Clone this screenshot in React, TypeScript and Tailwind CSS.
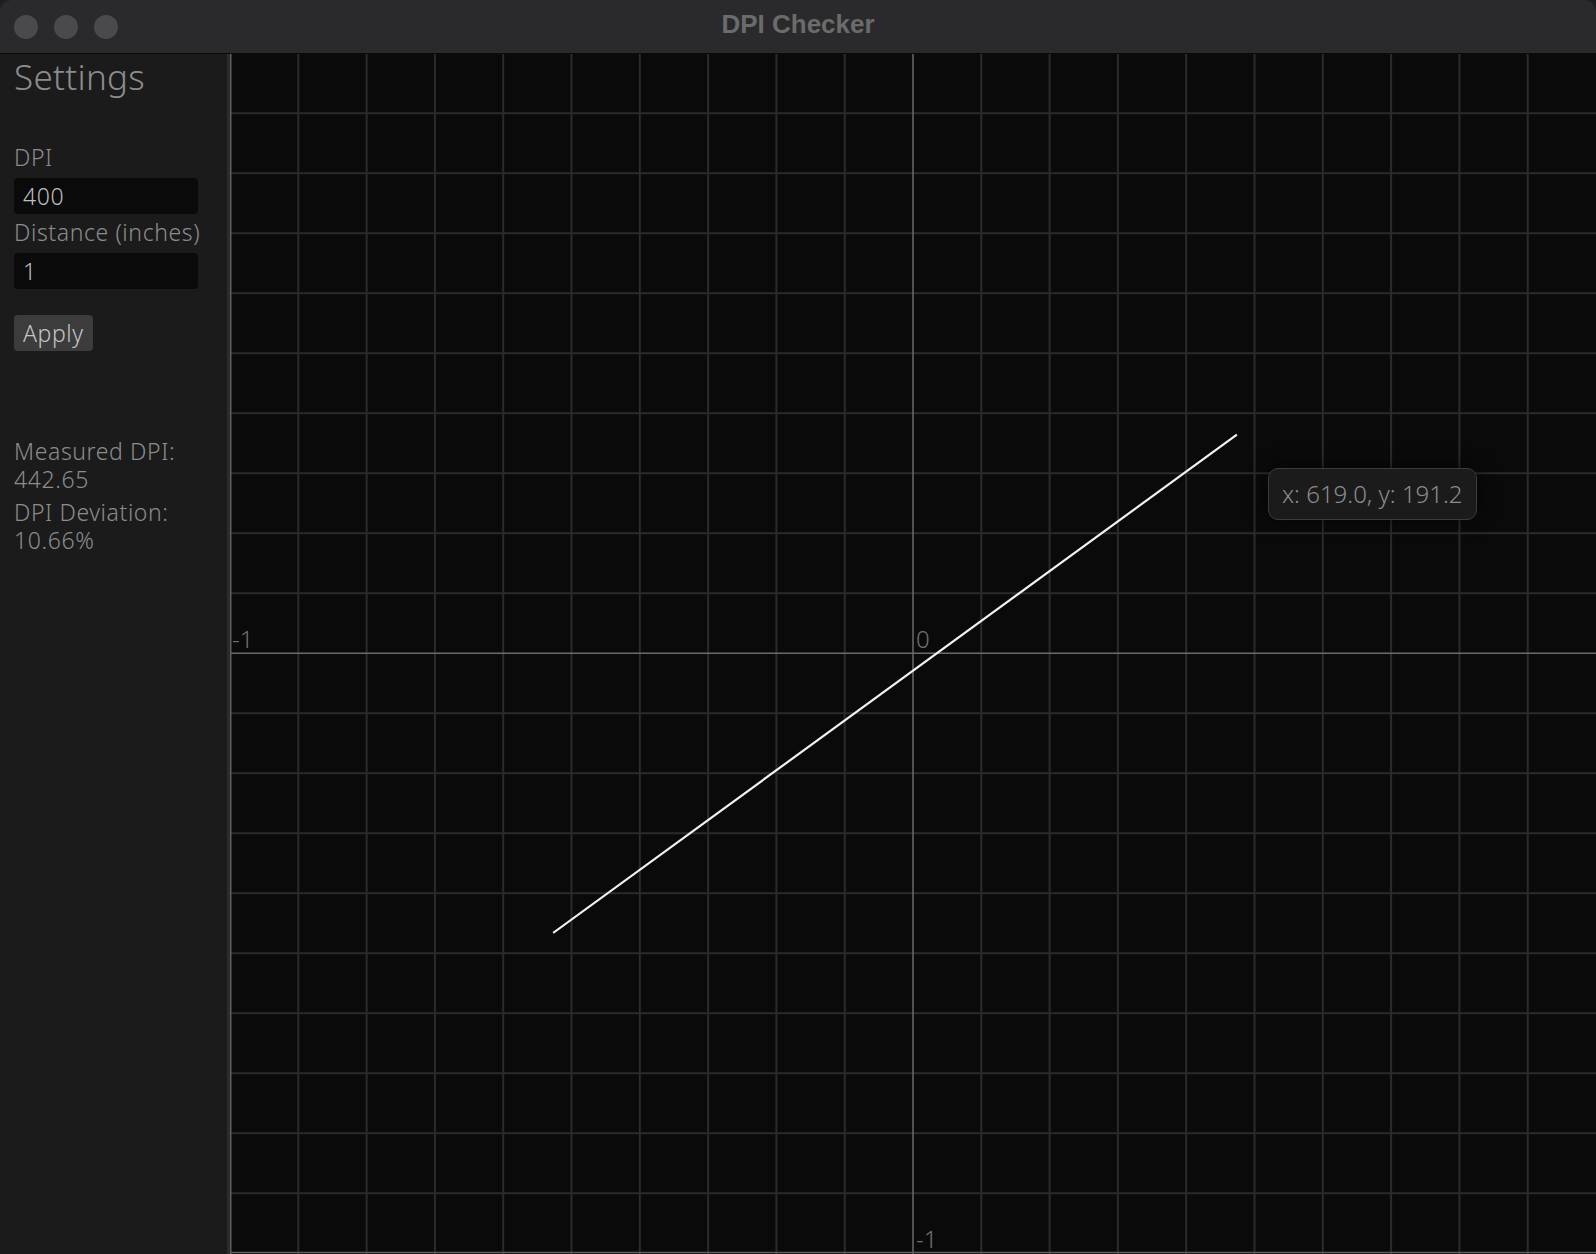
import React from 'react'

const PLOT_W = 1366
const PLOT_H = 1200
const CELL_X = PLOT_W / 20
const CELL_Y = 60

const GRID_COLOR = '#2b2b2b'
const AXIS_COLOR = '#6a6a6a'

function TrafficLights() {
  return (
    <div className="flex items-center gap-[16px] pl-[14px]">
      <span className="w-[24px] h-[24px] rounded-full bg-[#4a4a4c]" />
      <span className="w-[24px] h-[24px] rounded-full bg-[#4a4a4c]" />
      <span className="w-[24px] h-[24px] rounded-full bg-[#4a4a4c]" />
    </div>
  )
}

function Field({ label, value }: { label: string; value: string }) {
  return (
    <>
      <div className="text-[23px] leading-[28px] text-[#8c8c8c]">{label}</div>
      <div className="mt-[7px] h-[36px] w-[184px] rounded-[4px] bg-[#0a0a0a] pl-[9px] flex items-center text-[23px] text-[#bdbdbd]">
        {value}
      </div>
    </>
  )
}

function Sidebar() {
  return (
    <div className="w-[227px] flex-shrink-0 bg-[#1b1b1b] px-[14px] font-['Noto_Sans',sans-serif] font-light tracking-[0.6px]">
      <div className="mt-[3px] text-[35px] leading-[40px] tracking-[0.3px] text-[#8c8c8c]">Settings</div>
      <div className="mt-[46px] flex flex-col">
        <Field label="DPI" value="400" />
      </div>
      <div className="mt-[4px] flex flex-col">
        <Field label="Distance (inches)" value="1" />
      </div>
      <button className="mt-[26px] h-[36px] px-[9px] rounded-[4px] bg-[#3c3c3c] text-[23px] text-[#c4c4c4] flex items-center font-light tracking-[0.6px]">
        Apply
      </button>
      <div className="mt-[86px] text-[23px] leading-[28px] text-[#8c8c8c]">
        <div>Measured DPI:</div>
        <div>442.65</div>
      </div>
      <div className="mt-[5px] text-[23px] leading-[28px] text-[#8c8c8c]">
        <div>DPI Deviation:</div>
        <div>10.66%</div>
      </div>
    </div>
  )
}

function Plot() {
  const cols = Array.from({ length: 19 }, (_, i) => i + 1)
  const rows = Array.from({ length: 19 }, (_, i) => i + 1)
  return (
    <div className="relative flex-1 bg-[#0a0a0a] overflow-hidden">
      <svg width={PLOT_W} height={PLOT_H} viewBox={`0 0 ${PLOT_W} ${PLOT_H}`} className="block">
        {cols.filter(k => k !== 10).map(k => (
          <line key={`v${k}`} x1={k * CELL_X} x2={k * CELL_X} y1={0} y2={PLOT_H} stroke={GRID_COLOR} strokeWidth={2} />
        ))}
        {rows.filter(k => k !== 10).map(k => (
          <line key={`h${k}`} x1={0} x2={PLOT_W} y1={k * CELL_Y - 0.7} y2={k * CELL_Y - 0.7} stroke={GRID_COLOR} strokeWidth={2} />
        ))}
        <line x1={10 * CELL_X} x2={10 * CELL_X} y1={0} y2={PLOT_H} stroke={AXIS_COLOR} strokeWidth={1.5} />
        <line x1={0} x2={PLOT_W} y1={599.3} y2={599.3} stroke={AXIS_COLOR} strokeWidth={1.5} />
        <line x1={0.75} x2={0.75} y1={0} y2={PLOT_H} stroke="#5e5e5e" strokeWidth={1.5} />
        <line x1={0} x2={PLOT_W} y1={PLOT_H - 1.5} y2={PLOT_H - 1.5} stroke="#5e5e5e" strokeWidth={1.5} />

        <line x1={324} y1={878.3} x2={1006} y2={381.3} stroke="#f2f2f2" strokeWidth={2.2} strokeLinecap="square" />

        <g fill="#707070" fontFamily="'Noto Sans', sans-serif" fontWeight={300} fontSize={24}>
          <text x={2} y={594}>-1</text>
          <text x={686} y={594}>0</text>
          <text x={686} y={1194}>-1</text>
        </g>
      </svg>

      <div className="absolute left-[1038px] top-[414px] h-[52px] px-[13px] flex items-center rounded-[10px] border-[1.5px] border-[#3c3c3c] bg-[#1b1b1b] shadow-[0_0_18px_rgba(0,0,0,0.6)] font-['Noto_Sans',sans-serif] font-light text-[24px] text-[#8c8c8c] whitespace-nowrap">
        x: 619.0, y: 191.2
      </div>
    </div>
  )
}

export default function App() {
  return (
    <div className="w-[1596px] h-[1254px] bg-[#1e1e1e]">
      <div className="w-full h-full flex flex-col overflow-hidden rounded-t-[12px] bg-[#2a2a2c]">
        <div className="h-[54px] flex-shrink-0 grid grid-cols-[1fr_auto_1fr] items-center border-b border-[#0c0c0c]">
          <TrafficLights />
          <div className="mb-[5px] font-['Liberation_Sans',Arial,sans-serif] font-bold text-[26px] text-[#6b6b6b]">DPI Checker</div>
          <div />
        </div>
        <div className="flex flex-1 min-h-0">
          <Sidebar />
          <div className="w-[3px] flex-shrink-0 bg-[#2c2c2c]" />
          <Plot />
        </div>
      </div>
    </div>
  )
}
